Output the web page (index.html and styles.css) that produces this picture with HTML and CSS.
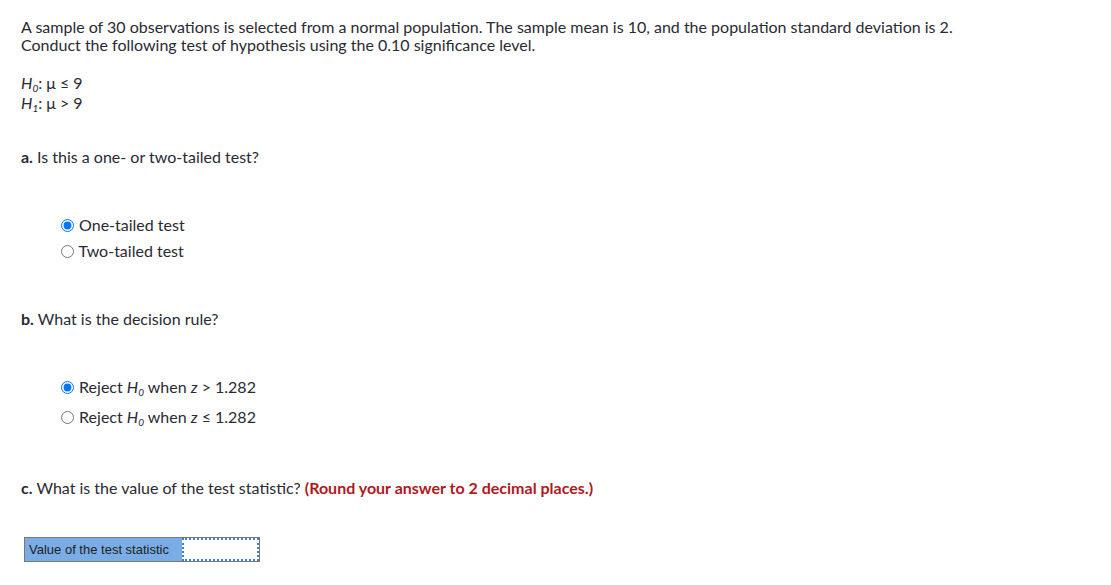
FILE: index.html
```html
<!DOCTYPE html>
<html>
<head>
  <meta charset="UTF-8">
  <title>Test of hypothesis</title>
  <link rel="stylesheet" href="styles.css">
</head>
<body>
  <div class="question">
    <p class="intro">A sample of 30 observations is selected from a normal population. The sample mean is 10, and the population standard deviation is 2.<br>Conduct the following test of hypothesis using the 0.10 significance level.</p>

    <div class="hypotheses">
      <div><i>H</i><sub>0</sub>: μ ≤ 9</div>
      <div><i>H</i><sub>1</sub>: μ &gt; 9</div>
    </div>

    <p class="part"><b>a.</b> Is this a one- or two-tailed test?</p>
    <div class="options">
      <label class="option"><input type="radio" name="tail" checked> One-tailed test</label>
      <label class="option"><input type="radio" name="tail"> Two-tailed test</label>
    </div>

    <p class="part part-b"><b>b.</b> What is the decision rule?</p>
    <div class="options options-b">
      <label class="option"><input type="radio" name="rule" checked> Reject <i>H</i><sub>0</sub> when <i>z</i> &gt; 1.282</label>
      <label class="option"><input type="radio" name="rule"> Reject <i>H</i><sub>0</sub> when <i>z</i> ≤ 1.282</label>
    </div>

    <p class="part part-c"><b>c.</b> What is the value of the test statistic? <span class="hint">(Round your answer to 2 decimal places.)</span></p>

    <table class="answer-table">
      <tr>
        <td class="answer-label">Value of the test statistic</td>
        <td class="answer-cell"><input type="text" class="answer-input"></td>
      </tr>
    </table>
  </div>
</body>
</html>
```

FILE: styles.css
```css
body {
  margin: 0;
  padding: 0;
  background-color: white;
  color: #2a2a33;
  font-family: Lato, "Open Sans", sans-serif;
  font-size: 16px;
}

.question {
  padding: 18px 21px;
}

p {
  margin: 0;
}

.intro {
  line-height: 18px;
}

.hypotheses {
  margin-top: 19px;
  line-height: 20px;
}

sub {
  font-size: 10px;
  font-style: italic;
  vertical-align: -3px;
  line-height: 0;
}

.part {
  margin-top: 34px;
}

.part b {
  font-weight: 700;
}

.options {
  display: flex;
  flex-direction: column;
  gap: 6px;
  margin-top: 49px;
  padding-left: 40px;
}

.option {
  display: block;
  line-height: 20px;
}

.option input {
  margin: 0 1px 0 0;
  width: 13px;
  height: 13px;
  vertical-align: -1px;
}

.part-b {
  margin-top: 48px;
}

.options-b {
  gap: 10px;
}

.part-c {
  margin-top: 51px;
}

.hint {
  color: #b0181e;
  font-weight: 700;
}

.answer-table {
  margin-top: 40px;
  margin-left: 3px;
  border-collapse: collapse;
}

.answer-label {
  background-color: #7aade6;
  border: 1px solid #777;
  border-right: none;
  padding: 0 13px 0 4px;
  height: 21px;
  font-family: "Liberation Sans", Arial, sans-serif;
  font-size: 13px;
  color: #222;
}

.answer-cell {
  padding: 0;
  border: 1px solid #777;
  border-left: none;
}

.answer-input {
  display: block;
  width: 77px;
  height: 23px;
  box-sizing: border-box;
  border: 2px dotted #3f7fcc;
  margin: 0;
}
```
